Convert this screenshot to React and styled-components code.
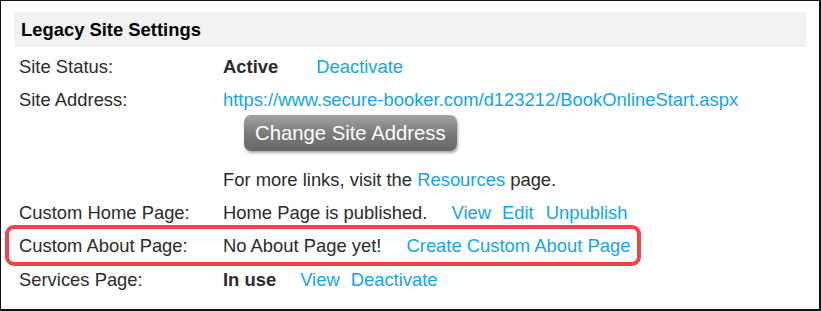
import React from 'react';
import styled, { createGlobalStyle } from 'styled-components';

const GlobalStyle = createGlobalStyle`
  html, body {
    margin: 0;
    padding: 0;
    background: #fff;
  }
  body {
    font-family: "Liberation Sans", Arial, sans-serif;
  }
`;

const Frame = styled.div`
  box-sizing: border-box;
  width: 821px;
  height: 311px;
  border-style: solid;
  border-color: #111;
  border-width: 1px 2px 2px 1px;
  padding: 11px 13px 0 13px;
  color: #2b2b2b;
  font-size: 18.4px;
`;

const Header = styled.div`
  height: 35px;
  background: #f2f2f2;
  padding-left: 7px;
  display: flex;
  align-items: center;
  font-weight: bold;
  font-size: 18.4px;
  color: #000;
  margin-bottom: 3px;
`;

const Row = styled.div`
  display: flex;
  align-items: center;
  height: 33px;
  padding-left: 5px;
`;

const HighlightRow = styled(Row)`
  width: fit-content;
  border: 4px solid #f0434a;
  border-radius: 9px;
  margin: -4px 0 -3px -9px;
  padding: 0 7px 0 10px;
`;

const Label = styled.div`
  width: 204px;
  flex-shrink: 0;
`;

const Value = styled.div`
  display: flex;
  align-items: center;
`;

const Strong = styled.span`
  font-weight: bold;
`;

const Link = styled.a`
  color: #13a5ea;
  text-decoration: none;
  cursor: pointer;
  margin-left: ${p => p.gap || 0}px;
`;

const ButtonRow = styled.div`
  padding-left: 230px;
  margin: -1px 0 12px 0;
`;

const GreyButton = styled.button`
  height: 36px;
  padding: 0 11px;
  border: none;
  border-radius: 7px;
  background: linear-gradient(#a3a3a3, #7c7c7c 50%, #676767);
  box-shadow: 1px 2px 3px rgba(0, 0, 0, 0.35);
  color: #fff;
  font-family: "Liberation Sans", Arial, sans-serif;
  font-size: 20.3px;
  cursor: pointer;
`;

export default function App() {
  return (
    <>
      <GlobalStyle />
      <Frame>
        <Header>Legacy Site Settings</Header>
        <Row>
          <Label>Site Status:</Label>
          <Value>
            <Strong>Active</Strong>
            <Link gap={38}>Deactivate</Link>
          </Value>
        </Row>
        <Row>
          <Label>Site Address:</Label>
          <Value>
            <Link>https://www.secure-booker.com/d123212/BookOnlineStart.aspx</Link>
          </Value>
        </Row>
        <ButtonRow>
          <GreyButton>Change Site Address</GreyButton>
        </ButtonRow>
        <Row>
          <Label />
          <Value>
            For more links, visit the&nbsp;<Link>Resources</Link>&nbsp;page.
          </Value>
        </Row>
        <Row>
          <Label>Custom Home Page:</Label>
          <Value>
            Home Page is published.
            <Link gap={24}>View</Link>
            <Link gap={11}>Edit</Link>
            <Link gap={12}>Unpublish</Link>
          </Value>
        </Row>
        <HighlightRow>
          <Label>Custom About Page:</Label>
          <Value>
            No About Page yet!
            <Link gap={25}>Create Custom About Page</Link>
          </Value>
        </HighlightRow>
        <Row>
          <Label>Services Page:</Label>
          <Value>
            <Strong>In use</Strong>
            <Link gap={24}>View</Link>
            <Link gap={11}>Deactivate</Link>
          </Value>
        </Row>
      </Frame>
    </>
  );
}
